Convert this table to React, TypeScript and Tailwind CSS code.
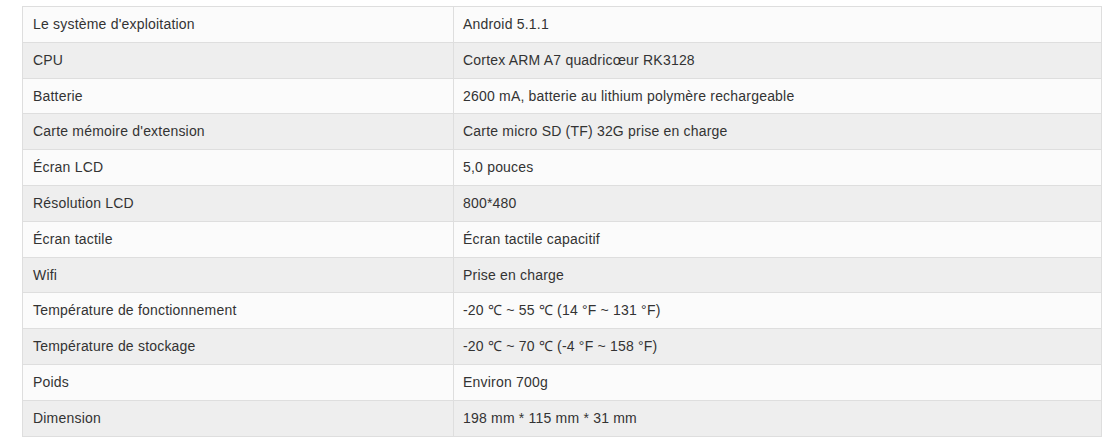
const specs = [
  ["Le système d'exploitation", "Android 5.1.1"],
  ["CPU", "Cortex ARM A7 quadricœur RK3128"],
  ["Batterie", "2600 mA, batterie au lithium polymère rechargeable"],
  ["Carte mémoire d'extension", "Carte micro SD (TF) 32G prise en charge"],
  ["Écran LCD", "5,0 pouces"],
  ["Résolution LCD", "800*480"],
  ["Écran tactile", "Écran tactile capacitif"],
  ["Wifi", "Prise en charge"],
  ["Température de fonctionnement", "-20 ℃ ~ 55 ℃ (14 °F ~ 131 °F)"],
  ["Température de stockage", "-20 ℃ ~ 70 ℃ (-4 °F ~ 158 °F)"],
  ["Poids", "Environ 700g"],
  ["Dimension", "198 mm * 115 mm * 31 mm"],
];

export default function App() {
  return (
    <div className="h-[442px] w-[1112px] bg-white pl-[22px] pt-[6px] font-['Liberation_Sans',Arial,sans-serif] text-[14px] tracking-[0.2px] text-[#333]">
      <table className="w-[1080px] table-fixed border-collapse border border-[#dedede]">
        <colgroup>
          <col className="w-[431px]" />
          <col />
        </colgroup>
        <tbody>
          {specs.map(([label, value], i) => (
            <tr key={label} className={i % 2 === 0 ? "bg-[#fbfbfb]" : "bg-[#eeeeee]"}>
              <td className="border border-[#dedede] px-[10px] py-2 align-middle leading-[18.8px]">{label}</td>
              <td className="border border-[#dedede] px-[9px] py-2 align-middle leading-[18.8px]">{value}</td>
            </tr>
          ))}
        </tbody>
      </table>
    </div>
  );
}
